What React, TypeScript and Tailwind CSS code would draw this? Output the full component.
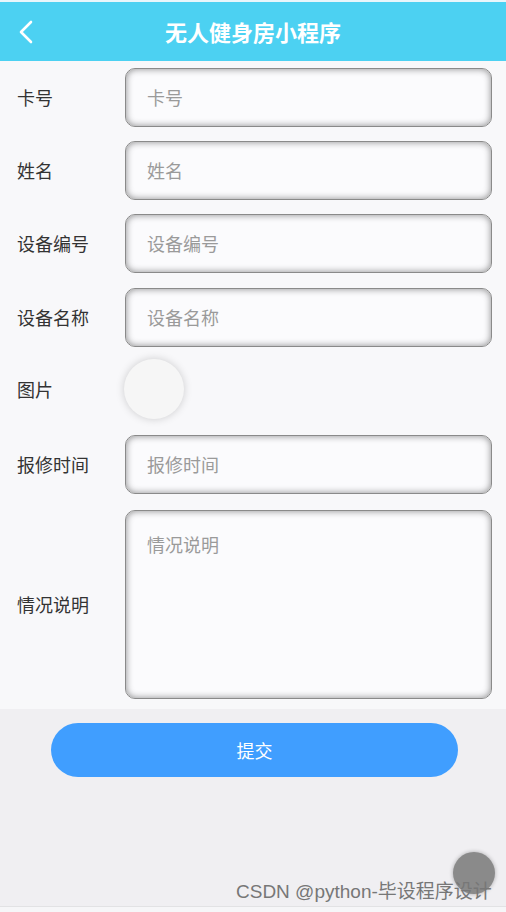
import React from "react";

const font = { fontFamily: '"Noto Sans CJK SC", "Noto Sans", sans-serif' };

function Row({ label, placeholder }: { label: string; placeholder: string }) {
  return (
    <div className="flex items-center h-[59px]">
      <div className="w-[125px] pl-[17px] text-[18px] text-[#333]">{label}</div>
      <div className="w-[367px] h-[59px] rounded-[10px] border-[1.5px] border-[#8a8a8a] bg-[#fbfbfd] shadow-[inset_0_0_7px_rgba(0,0,0,0.45)] flex items-center pl-[21px] text-[18px] text-[#9a9a9a]">
        {placeholder}
      </div>
    </div>
  );
}

export default function App() {
  return (
    <div className="w-[506px] h-[912px] bg-[#f0eff2] flex flex-col overflow-hidden" style={font}>
      <div className="h-[2px] bg-[#e8f6fb]" />
      <div className="h-[59px] bg-[#4cd1f2] flex items-center relative">
        <svg className="absolute left-[16px] top-[17px]" width="20" height="26" viewBox="0 0 20 26">
          <path d="M15 3 L5 13 L15 23" fill="none" stroke="white" strokeWidth="2.6" strokeLinecap="round" strokeLinejoin="round" />
        </svg>
        <div className="w-full text-center text-white font-bold text-[22px]">无人健身房小程序</div>
      </div>
      <div className="bg-[#f8f8fa] pt-[7px] pb-[10px] flex flex-col">
        <Row label="卡号" placeholder="卡号" />
        <div className="h-[14px]" />
        <Row label="姓名" placeholder="姓名" />
        <div className="h-[14px]" />
        <Row label="设备编号" placeholder="设备编号" />
        <div className="h-[15px]" />
        <Row label="设备名称" placeholder="设备名称" />
        <div className="h-[12px]" />
        <div className="flex items-center h-[60px]">
          <div className="w-[124px] pl-[17px] text-[18px] text-[#333]">图片</div>
          <div className="w-[60px] h-[60px] rounded-full bg-[#f6f6f6] shadow-[0_0_8px_rgba(0,0,0,0.18)]" />
        </div>
        <div className="h-[16px]" />
        <Row label="报修时间" placeholder="报修时间" />
        <div className="h-[16px]" />
        <div className="flex items-center h-[189px]">
          <div className="w-[125px] pl-[17px] text-[18px] text-[#333]">情况说明</div>
          <div className="w-[367px] h-[189px] rounded-[10px] border-[1.5px] border-[#8a8a8a] bg-[#fbfbfd] shadow-[inset_0_0_7px_rgba(0,0,0,0.45)] pl-[21px] pt-[20px] text-[18px] text-[#9a9a9a]">
            情况说明
          </div>
        </div>
      </div>
      <div className="flex-1 relative">
        <div className="mt-[14px] ml-[51px] w-[407px] h-[54px] rounded-full bg-[#409eff] flex items-center justify-center text-white text-[18px]">
          提交
        </div>
        <div className="absolute left-[453px] top-[143px] w-[42px] h-[42px] rounded-full bg-[#8a8a8a] shadow-[0_0_4px_rgba(0,0,0,0.3)]" />
        <div className="absolute left-[236px] top-[169px] text-[19px] text-[#777] whitespace-nowrap" style={{ fontFamily: '"Liberation Sans", "Noto Sans CJK SC", sans-serif' }}>
          CSDN @python-毕设程序设计
        </div>
        <div className="absolute left-0 right-0 bottom-0 h-[6px] bg-[#f6f6f8] border-t border-[#e2e2e4]" />
      </div>
    </div>
  );
}
